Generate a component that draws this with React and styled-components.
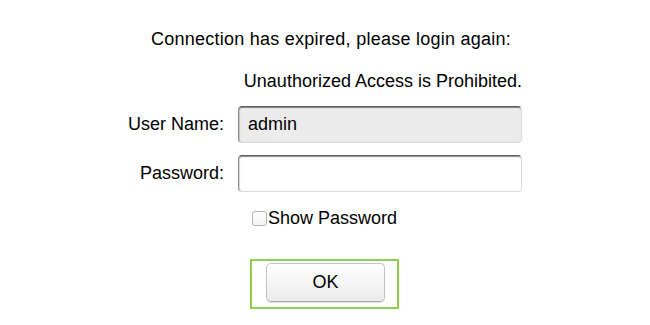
import styled, { createGlobalStyle } from 'styled-components'

const GlobalStyle = createGlobalStyle`
  html, body {
    margin: 0;
    padding: 0;
    background: #ffffff;
  }
  body {
    font-family: "Liberation Sans", Arial, sans-serif;
    color: #000;
  }
`

export default function App() {
  return (
    <Page>
      <GlobalStyle />
      <Title>Connection has expired, please login again:</Title>
      <Notice>Unauthorized Access is Prohibited.</Notice>
      <Form>
        <Label>User Name:</Label>
        <Field defaultValue="admin" $filled />
        <Label>Password:</Label>
        <Field type="password" />
        <span />
        <CheckRow>
          <Check type="checkbox" />
          Show Password
        </CheckRow>
      </Form>
      <ButtonFrame>
        <OkButton>OK</OkButton>
      </ButtonFrame>
    </Page>
  )
}

const Page = styled.div`
  width: 650px;
  height: 325px;
  display: flex;
  flex-direction: column;
  font-size: 18px;
`

const Title = styled.div`
  margin-top: 29px;
  padding-left: 12px;
  text-align: center;
  line-height: 20px;
  letter-spacing: 0.25px;
`

const Notice = styled.div`
  margin-top: 22px;
  width: 522px;
  text-align: right;
  line-height: 20px;
`

const Form = styled.div`
  margin-top: 15px;
  display: grid;
  grid-template-columns: 224px 284px;
  column-gap: 14px;
  row-gap: 12px;
  align-items: center;
`

const Label = styled.div`
  text-align: right;
`

const Field = styled.input`
  box-sizing: border-box;
  width: 284px;
  height: 37px;
  margin: 0;
  padding: 0 9px;
  font: inherit;
  font-size: 18px;
  color: #000;
  background: ${({ $filled }) => ($filled ? '#ececec' : '#ffffff')};
  border: 1px solid #dcdcdc;
  border-top-color: #5e5e5e;
  border-left-color: #8e8e8e;
  border-radius: 4px;
  box-shadow: inset 0 2px 1px -1px rgba(0, 0, 0, 0.45), inset 1px 0 1px rgba(0, 0, 0, 0.18);
  outline: none;
`

const CheckRow = styled.label`
  display: flex;
  align-items: center;
  margin-left: 14px;
  margin-top: 3px;
  height: 22px;
`

const Check = styled.input`
  appearance: none;
  box-sizing: border-box;
  width: 15px;
  height: 15px;
  margin: 0 1px 0 0;
  border: 1px solid #b4b4b4;
  border-radius: 3px;
  background: linear-gradient(#ffffff, #f3f3f3);
`

const ButtonFrame = styled.div`
  box-sizing: border-box;
  align-self: flex-start;
  margin-left: 250px;
  margin-top: 30px;
  width: 149px;
  height: 50px;
  border: 2px solid #8fd14f;
  padding: 2px 0 0 14px;
`

const OkButton = styled.button`
  box-sizing: border-box;
  width: 119px;
  height: 39px;
  font-family: "Liberation Sans", Arial, sans-serif;
  font-size: 18px;
  color: #000;
  background: linear-gradient(#ffffff, #ececec);
  border: 1px solid #c4c4c4;
  border-bottom-color: #a9a9a9;
  border-radius: 5px;
  box-shadow: 0 1px 1px rgba(0, 0, 0, 0.12);
  cursor: pointer;
`
